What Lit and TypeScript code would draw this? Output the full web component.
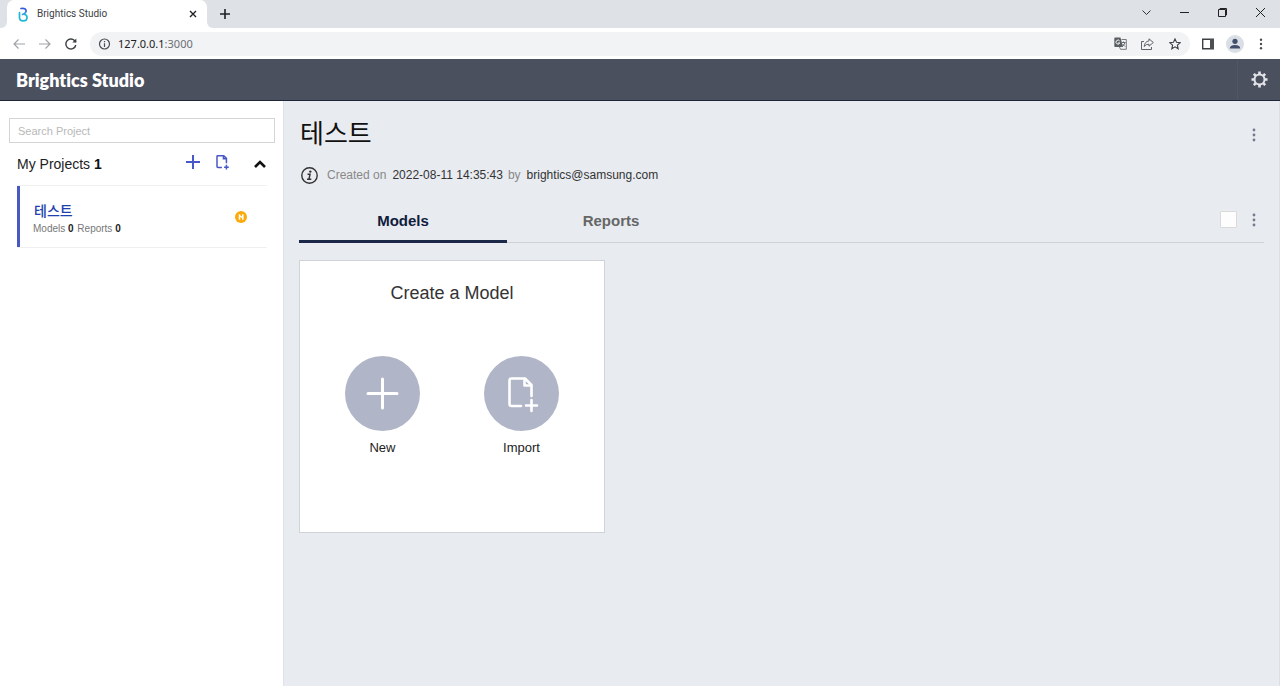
import { LitElement, html, css, svg } from "lit";
import { customElement, property, state } from "lit/decorators.js";
import { classMap } from "lit/directives/class-map.js";

const documentPlus = svg`
  <path d="M13 29H3.5Q1.5 29 1.5 27V3.500Q1.500 1.500 3.500 1.500H17L23.500 8V19" />
  <path d="M16.500 2V8.500H23" />
  <path d="M23.500 23V34M18 28.500H29" />`;

const dots = html`<svg width="4" height="14" viewBox="0 0 4 14" aria-hidden="true">
  <g fill="#747a8c"><circle cx="2" cy="2" r="1.400" /><circle cx="2" cy="7" r="1.400" /><circle cx="2" cy="12" r="1.400" /></g>
</svg>`;

const buttonReset = css`
  * { box-sizing: border-box; }
  button {
    display: inline-flex;
    align-items: center;
    justify-content: center;
    padding: 0;
    border: 0;
    background: none;
    color: inherit;
    font: inherit;
    cursor: pointer;
  }
  svg { display: block; flex: none; }
`;

@customElement("browser-frame")
class BrowserFrame extends LitElement {
  static styles = [buttonReset, css`
    :host { display: block; font-family: "Noto Sans", "Open Sans", sans-serif; color: #202124; }
    .strip { display: flex; height: 28px; background: #dee1e6; }
    .lead { width: 7px; background: #fff; }
    .lead::before { content: ""; display: block; height: 100%; background: #dee1e6; border-bottom-right-radius: 6px; }
    .tab { display: flex; align-items: center; width: 200px; padding: 0 8px 0 11px; background: #fff; border-radius: 7px 7px 0 0; }
    .tab span { flex: 1; padding-left: 8px; font: 10px/16px Roboto, sans-serif; color: #3c4043; }
    .tab button { width: 12px; height: 16px; }
    .after { flex: 1; background: #fff; }
    .after div { display: flex; align-items: flex-start; height: 100%; background: #dee1e6; border-bottom-left-radius: 6px; }
    .add { width: 36px; height: 28px; }
    .after .window { margin-left: auto; padding-right: 1px; height: 25px; }
    .window button { width: 38px; height: 25px; }
    .bar { display: flex; align-items: center; height: 31px; padding: 0 6px; background: #fff; }
    .nav { width: 26px; height: 24px; }
    .address { display: flex; align-items: center; flex: 1; height: 24px; margin-left: 6px; padding: 0 2px 0 8px; border-radius: 12px; background: #f1f3f4; }
    .url { flex: 1; padding-left: 7px; font-size: 11px; line-height: 16px; }
    .url i { font-style: normal; color: #6b6f74; }
    .tool { width: 27px; height: 24px; }
    .menu { width: 26px; height: 24px; }
    .extras { display: flex; margin-left: 4px; }
    .side { width: 27px; height: 24px; }
  `];

  render() {
    return html`
      <div class="strip">
        <div class="lead"></div>
        <div class="tab">
          <svg width="11" height="15" viewBox="0 0 11 15" fill="none" stroke-width="1.700" stroke-linecap="round">
            <path d="M3 1.500C6 .8 8.500 2 8 4.500" stroke="#3658dc" />
            <path d="M8 4.500C7.500 6.300 6 7 4.500 7.500" stroke="#2e9ae0" />
            <path d="M1.500 5.500V10.500C1.500 15 9 15 9 10.500C9 8.500 8 7.500 6.500 7.500" stroke="#20b8d4" />
          </svg>
          <span>Brightics Studio</span>
          <button aria-label="Close tab"><svg width="8" height="8" viewBox="0 0 8 8" stroke="#202124" stroke-width="1.400"><path d="M1 1L7 7M7 1L1 7" /></svg></button>
        </div>
        <div class="after"><div>
          <button class="add" aria-label="New tab"><svg width="10" height="10" viewBox="0 0 10 10" stroke="#202124" stroke-width="1.600"><path d="M5 0V10M0 5H10" /></svg></button>
          <div class="window">
            <button aria-label="Search tabs"><svg width="9" height="6" viewBox="0 0 9 6" fill="none" stroke="#333"><path d="M.5 .5L4.500 4.500L8.500 .5" /></svg></button>
            <button aria-label="Minimize"><svg width="9" height="9" viewBox="0 0 9 9" stroke="#222"><path d="M0 4.500H9" /></svg></button>
            <button aria-label="Restore"><svg width="9" height="9" viewBox="0 0 9 9" fill="none" stroke="#222"><path d="M.5 1.500H7.500V8.500H.5ZM2 1V.5H8.500V7H8" /></svg></button>
            <button aria-label="Close window"><svg width="9" height="9" viewBox="0 0 9 9" stroke="#222"><path d="M0 0L9 9M9 0L0 9" /></svg></button>
          </div>
        </div></div>
      </div>
      <div class="bar">
        <button class="nav" aria-label="Back"><svg width="12" height="10" viewBox="0 0 12 10" fill="none" stroke="#a0a3a7" stroke-width="1.200"><path d="M12 5H1M5.500 .5L1 5L5.500 9.500" /></svg></button>
        <button class="nav" aria-label="Forward"><svg width="12" height="10" viewBox="0 0 12 10" fill="none" stroke="#a0a3a7" stroke-width="1.200"><path d="M0 5H11M6.500 .5L11 5L6.500 9.500" /></svg></button>
        <button class="nav" aria-label="Reload"><svg width="12" height="12" viewBox="0 0 12 12" fill="none" stroke="#3c4043" stroke-width="1.400"><path d="M10.800 7A5 5 0 1 1 9.500 2.500L11 4" /><path d="M11.300 .5V4.500H7.300Z" fill="#3c4043" stroke="none" /></svg></button>
        <div class="address">
          <svg width="13" height="12" viewBox="0 0 13 12" fill="none" stroke="#4a4d51" stroke-width="1.200"><circle cx="6.500" cy="6" r="5" /><path d="M6.500 5.300V9M6.500 3V4.300" /></svg>
          <div class="url">127.0.0.1<i>:3000</i></div>
          <button class="tool" aria-label="Translate"><svg width="13" height="13" viewBox="0 0 13 13"><path d="M1 .5H6.500L9 10H1Q.3 10 .3 9V1.500Q.3 .5 1 .5" fill="#5b5f63" /><path d="M7.500 2.500H12.300V12.300H6.500L5.500 10" fill="none" stroke="#777b7f" /><path d="M5.700 4A2 2 0 1 0 5.800 6H4" fill="none" stroke="#fff" /><path d="M7.500 5.500H11.500M9.500 4.500V5.500M11 5.500Q10 8 8.500 9.500M8.500 7L11 9.500" fill="none" stroke="#5b5f63" stroke-width=".9" /></svg></button>
          <button class="tool" aria-label="Share"><svg width="13" height="12" viewBox="0 0 13 12" fill="none" stroke="#5f6368"><path d="M3 3.500H.5V11.500H10.500V9" /><path d="M8 .8L12.300 4.500L8 8.200V6.200Q5 6 3.200 8.500Q3.700 3.500 8 2.900Z" /></svg></button>
          <button class="tool" aria-label="Bookmark"><svg width="12" height="12" viewBox="0 0 12 12" fill="none" stroke="#3c4043" stroke-width="1.100"><path d="M6 .9L7.500 4.300L11.200 4.700L8.400 7.100L9.200 10.800L6 8.900L2.800 10.800L3.600 7.100L.8 4.700L4.500 4.300Z" /></svg></button>
        </div>
        <div class="extras">
          <button class="side" aria-label="Side panel"><svg width="12" height="12" viewBox="0 0 12 12"><path d="M.7 1.200H11.300V10.800H.7Z" fill="none" stroke="#3c4043" stroke-width="1.400" /><path d="M8 1H12V11H8Z" fill="#4c5053" /></svg></button>
          <button class="side" aria-label="Profile"><svg width="18" height="18" viewBox="0 0 18 18"><circle cx="9" cy="9" r="9" fill="#dadee5" /><circle cx="9" cy="6.300" r="2.600" fill="#414d6a" /><path d="M3.800 13.500Q3.800 10 9 10T14.200 13.500Z" fill="#414d6a" /></svg></button>
          <button class="menu" aria-label="Browser menu"><svg width="4" height="12" viewBox="0 0 4 12" fill="#4a4d51"><circle cx="2" cy="1.700" r="1.200" /><circle cx="2" cy="6" r="1.200" /><circle cx="2" cy="10.300" r="1.200" /></svg></button>
        </div>
      </div>`;
  }
}

@customElement("project-sidebar")
class ProjectSidebar extends LitElement {
  @state() open = true;

  static styles = [buttonReset, css`
    :host { display: block; width: 284px; flex: none; padding: 17px 8px 17px 9px; background: #fff; border-right: 1px solid #dfe2e8; box-sizing: border-box; }
    input { display: block; width: 100%; height: 25px; padding: 0 8px; border: 1px solid #d5d5d5; border-radius: 0; background: #fff; font: 11px "Liberation Sans", sans-serif; color: #333; }
    input::placeholder { color: #b8b8b8; opacity: 1; }
    .body { padding: 0 8px; }
    .head { display: flex; align-items: center; height: 42px; }
    h2 { flex: 1; margin: 0; font-size: 14px; line-height: 20px; font-weight: 400; color: #222; }
    h2 b { color: #111; }
    .icon { width: 30px; height: 24px; margin-bottom: 4px; }
    .fold { width: 14px; height: 24px; margin-left: 15px; }
    .project { display: flex; align-items: center; height: 63px; padding: 0 20px 0 13px; border-top: 1px solid #f0f0f0; border-bottom: 1px solid #f0f0f0; box-shadow: inset 3px 0 #4a58c4; color: inherit; text-decoration: none; }
    .text { flex: 1; padding: 4px 0 0 3px; }
    .name { padding-left: 1px; font: 500 14px/20px "Noto Sans CJK KR", sans-serif; color: #2040b0; }
    .counts { font-size: 10px; line-height: 18px; color: #777; }
    .counts b { margin-right: 1px; color: #222; }
  `];

  render() {
    return html`
      <input type="search" aria-label="Search Project" placeholder="Search Project" />
      <div class="body">
        <div class="head">
          <h2>My Projects <b>1</b></h2>
          <button class="icon" aria-label="New project"><svg width="14" height="14" viewBox="0 0 14 14" stroke="#4958c8" stroke-width="2"><path d="M7 0V14M0 7H14" /></svg></button>
          <button class="icon" aria-label="Import project"><svg width="14" height="15" viewBox="0 0 31 35" fill="none" stroke="#4958c8" stroke-width="3.500">${documentPlus}</svg></button>
          <button class="fold" aria-label="Toggle projects" aria-expanded=${this.open ? "true" : "false"} @click=${() => (this.open = !this.open)}><svg width="12" height="8" viewBox="0 0 12 8" fill="none" stroke="#111" stroke-width="2.600"><path d="M1 7L6 2L11 7" /></svg></button>
        </div>
        ${this.open ? html`<a class="project" href="#project">
          <div class="text">
            <div class="name">테스트</div>
            <div class="counts">Models <b>0</b> Reports <b>0</b></div>
          </div>
          <svg width="12" height="12" viewBox="0 0 12 12" role="img" aria-label="Owner"><circle cx="6" cy="6" r="6" fill="#fcaa0b" /><path d="M4.500 3.200V8.800M7.800 3.200V8.800M4.500 4.500L7.800 7" fill="none" stroke="#fff" stroke-width="1.500" /></svg>
        </a>` : null}
      </div>`;
  }
}

@customElement("project-detail")
class ProjectDetail extends LitElement {
  @property() tab = "Models";

  static styles = [buttonReset, css`
    :host { display: block; flex: 1; min-width: 0; padding: 17px 15px 16px; background: #e8ebf0; border-right: 1px solid #dcdfe6; box-sizing: border-box; }
    .title { display: flex; align-items: flex-start; justify-content: space-between; height: 34px; }
    h1 { margin: 0; padding-left: 1px; font: 400 26px/28px "Noto Sans CJK KR", sans-serif; color: #111; }
    .more { width: 20px; height: 34px; }
    .meta { display: flex; align-items: center; height: 18px; margin-top: 14px; padding-left: 2px; font-size: 12px; line-height: 18px; color: #333; white-space: nowrap; }
    .meta span { color: #888; margin: 0 6px 0 5px; }
    .meta svg + span { margin-left: 9px; }
    .tabs { display: flex; align-items: center; height: 46px; margin-top: 13px; border-bottom: 1px solid #cfd3d8; }
    .tab { width: 208px; height: 46px; padding-top: 5px; border-bottom: 3px solid transparent; font-size: 15px; font-weight: 700; color: #666; }
    .tab.active { color: #101c3c; border-color: #1c2849; }
    input { appearance: none; width: 17px; height: 17px; margin: 0 7px 0 auto; border: 1px solid #d9d9d9; border-radius: 1px; background: #fdfdfd; }
    input:checked { background: #4958c8; }
    .card { width: 306px; min-height: 273px; margin-top: 17px; padding: 20px 32px; border: 1px solid #cfd2d6; background: #fff; }
    h3 { margin: 0; font-size: 18px; line-height: 24px; font-weight: 400; text-align: center; color: #333; }
    .actions { display: flex; justify-content: space-between; padding: 51px 13px 0; }
    .action { flex-direction: column; gap: 8px; font-size: 13px; line-height: 18px; color: #222; }
    .disc { display: flex; align-items: center; justify-content: center; width: 75px; height: 75px; border-radius: 50%; background: #b0b5c7; }
  `];

  render() {
    return html`
      <div class="title"><h1>테스트</h1><button class="more" aria-label="Project menu">${dots}</button></div>
      <div class="meta">
        <svg width="17" height="17" viewBox="0 0 17 17"><circle cx="8.500" cy="8.500" r="7.700" fill="none" stroke="#333" stroke-width="1.400" /><circle cx="9.300" cy="4.600" r="1.200" fill="#333" /><path d="M6.500 7.300H9L8 12.200H10.300M6 12.200H8" fill="none" stroke="#333" stroke-width="1.500" /></svg>
        <span>Created on</span>2022-08-11 14:35:43<span>by</span>brightics@samsung.com
      </div>
      <div class="tabs">
        ${["Models", "Reports"].map((name) => html`<button class=${classMap({ tab: true, active: this.tab === name })} @click=${() => (this.tab = name)}>${name}</button>`)}
        <input type="checkbox" aria-label="Select all" />
        <button class="more" aria-label="List menu">${dots}</button>
      </div>
      <section class="card">
        <h3>Create a Model</h3>
        <div class="actions">
          <button class="action"><span class="disc"><svg width="33" height="33" viewBox="0 0 33 33" stroke="#fff" stroke-width="3" stroke-linecap="round"><path d="M16.500 2V31M2 16.500H31" /></svg></span>New</button>
          <button class="action"><span class="disc"><svg width="35" height="39" viewBox="-4 -3 35 39" fill="none" stroke="#fff" stroke-width="2.600" stroke-linecap="round" stroke-linejoin="round">${documentPlus}</svg></span>Import</button>
        </div>
      </section>`;
  }
}

@customElement("app-root")
class AppRoot extends LitElement {
  static styles = [buttonReset, css`
    :host { display: flex; flex-direction: column; min-height: 100vh; font-family: "Liberation Sans", Arial, sans-serif; background: #fff; }
    header { display: flex; align-items: center; justify-content: space-between; height: 42px; padding-left: 16px; background: #4b505f; border-bottom: 1px solid #20263a; }
    .brand { font: 800 18px/24px "Lato", sans-serif; font-variant-ligatures: none; color: #fff; }
    .settings { width: 43px; height: 100%; border-left: 1px solid #525767; }
    main { display: flex; flex: 1; }
  `];

  render() {
    return html`
      <browser-frame></browser-frame>
      <header>
        <div class="brand">Brightics Studio</div>
        <button class="settings" aria-label="Settings"><svg width="17" height="17" viewBox="0 0 17 17" fill="none" stroke="#e3e5e9"><circle cx="8.500" cy="8.500" r="5" stroke-width="2" /><path d="M8.500 .5V3M8.500 14V16.500M.5 8.500H3M14 8.500H16.500M2.800 2.800L4.600 4.600M12.400 12.400L14.200 14.200M2.800 14.200L4.600 12.400M12.400 4.600L14.200 2.800" stroke-width="2.600" /></svg></button>
      </header>
      <main><project-sidebar></project-sidebar><project-detail></project-detail></main>`;
  }
}
